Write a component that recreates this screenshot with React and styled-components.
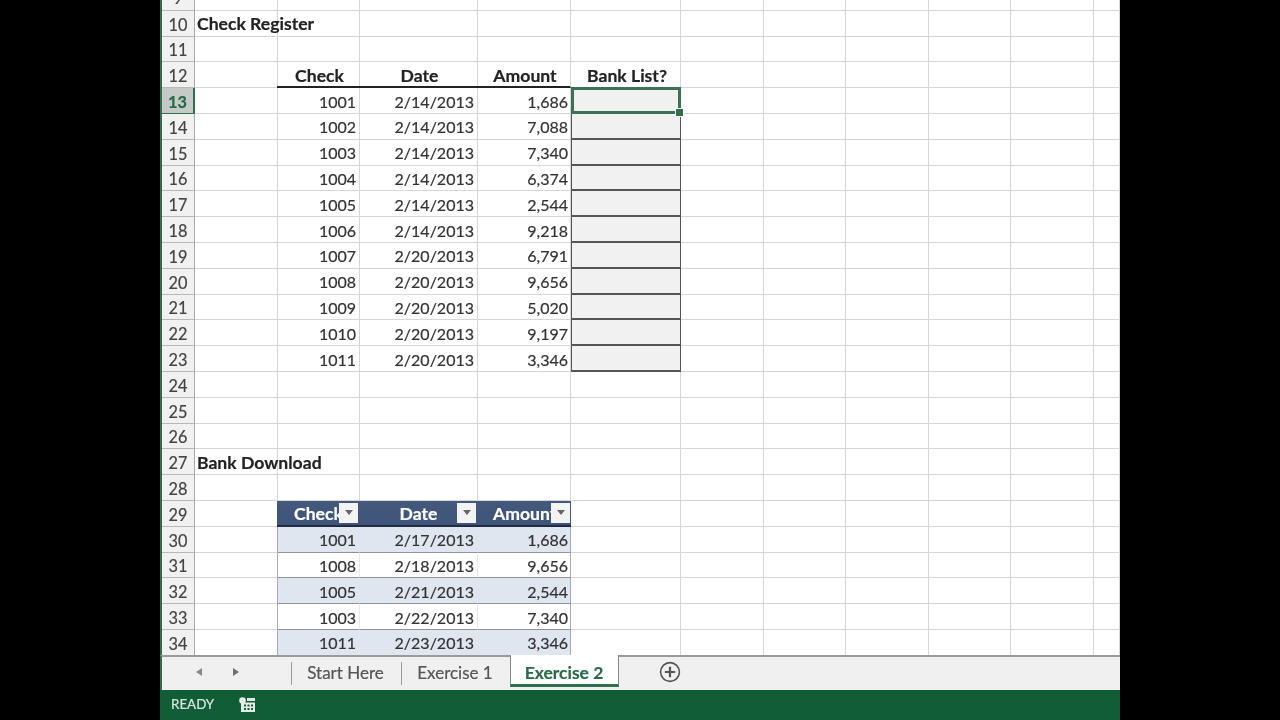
import React from "react";
import styled, { createGlobalStyle, css } from "styled-components";

const Global = createGlobalStyle`
  html, body { margin: 0; padding: 0; width: 1280px; height: 720px; overflow: hidden; background: #000; }
  #root { width: 1280px; height: 720px; }
`;

const COLS = "33px 83px 82px 118px 93px 110px 83px 82px 83px 82px 83px 1fr";
const ROW_H = 25.81;

const Stage = styled.div`
  width: 1280px;
  height: 720px;
  background: #000;
  display: flex;
  justify-content: center;
  font-family: Lato, "Open Sans", sans-serif;
`;
const Workbook = styled.div`
  width: 960px;
  height: 720px;
  display: flex;
  flex-direction: column;
  background: #fff;
  filter: blur(0.55px);
  -webkit-text-stroke: 0.2px currentColor;
`;
const Sheet = styled.div`
  height: 655px;
  flex: none;
  overflow: hidden;
  border-left: 2px solid #2f6f4e;
  box-sizing: border-box;
`;
const Row = styled.div`
  display: grid;
  grid-template-columns: ${COLS};
  height: ${(p) => p.$h}px;
`;
const RowHead = styled.div`
  box-sizing: border-box;
  display: flex;
  align-items: ${(p) => (p.$partial ? "flex-end" : "center")};
  justify-content: center;
  font-size: 16.3px;
  color: #444;
  padding: ${(p) => (p.$partial ? "0 0 3px 0" : "2px 0 0 0")};
  overflow: hidden;
  background: ${(p) => (p.$active ? "#c6cac7" : "#f1f1f1")};
  border-bottom: 1px solid ${(p) => (p.$active ? "#2f6f4e" : "#b8b8b8")};
  border-right: ${(p) => (p.$active ? "2px solid #2f6f4e" : "1px solid #a9a9a9")};
  ${(p) => p.$active && css`color: #1f6b45; font-weight: 700;`}
`;
const Cell = styled.div`
  box-sizing: border-box;
  position: relative;
  display: flex;
  align-items: center;
  white-space: nowrap;
  font-size: 16px;
  color: #333;
  border-right: 1px solid #d6d6d6;
  border-bottom: 1px solid #d6d6d6;
  justify-content: ${(p) => (p.$align === "center" ? "center" : p.$align === "left" ? "flex-start" : "flex-end")};
  padding: ${(p) => (p.$align === "left" ? "1px 0 0 2px" : p.$align === "center" ? "1px 0 0 3px" : p.$tight ? "1px 2px 0 0" : "1px 3px 0 0")};
  ${(p) => p.$bold && css`font-size: 17.6px; font-weight: 700; color: #222;`}
  ${(p) => p.$rule && css`
    border-bottom: 2px solid #222;
    margin-left: -1px;
    padding-top: 2px;
  `}
  ${(p) => p.$band && css`
    background: ${p.$band === "dark" ? "#e0e6ef" : "#fff"};
    border-right-color: ${p.$band === "dark" ? "#e0e6ef" : "#e8e8e8"};
    border-bottom: 1px solid #8f949c;
  `}
  ${(p) => p.$lastBand && css`border-right: 1px solid #a4adbb;`}
  ${(p) => p.$firstBand && css`box-shadow: -1px 0 0 #a4adbb;`}
`;
const InputCell = styled.div`
  box-sizing: border-box;
  position: relative;
  background: #f1f1f1;
  border-left: 1.5px solid #555;
  border-right: 1.5px solid #555;
  border-bottom: 2px solid #555;
  ${(p) => p.$selected && css`
    border: 3px solid #3b7157;
    margin-top: -1px;
    height: calc(100% + 1px);
    z-index: 2;
  `}
`;
const Handle = styled.span`
  position: absolute;
  right: -6px;
  bottom: -6px;
  width: 9px;
  height: 9px;
  background: #2f6f4e;
  border: 1px solid #fff;
  box-sizing: border-box;
`;
const TableHead = styled.div`
  box-sizing: border-box;
  position: relative;
  overflow: hidden;
  display: flex;
  align-items: center;
  justify-content: ${(p) => (p.$pad ? "flex-start" : "center")};
  padding: 2px 0 0 ${(p) => p.$pad || 0}px;
  margin-left: -1px;
  background: linear-gradient(#44597c, #3e5478);
  border-bottom: 2px solid #1f2c44;
  color: #fff;
  font-size: 17.6px;
  font-weight: 700;
  white-space: nowrap;
`;
const FilterBtn = styled.span`
  position: absolute;
  right: ${(p) => p.$right}px;
  top: 2px;
  width: 19px;
  height: 20px;
  background: #f3f3f3;
  display: flex;
  align-items: center;
  justify-content: center;
  &::after {
    content: "";
    border-left: 4.500px solid transparent;
    border-right: 4.500px solid transparent;
    border-top: 5px solid #666;
  }
`;
const TabBar = styled.div`
  height: 35px;
  flex: none;
  box-sizing: border-box;
  background: #f0f0f0;
  border-top: 2px solid #9a9a9a;
  border-left: 2px solid #2f6f4e;
  display: flex;
  align-items: flex-start;
  padding-left: 34px;
  color: #555;
  font-size: 17px;
`;
const Nav = styled.div`
  display: flex;
  align-items: center;
  gap: 31px;
  height: 30px;
  width: 95px;
  flex: none;
`;
const Arrow = styled.span`
  width: 0;
  height: 0;
  border-top: 4.500px solid transparent;
  border-bottom: 4.500px solid transparent;
  ${(p) => (p.$dir === "left" ? "border-right: 6px solid #8a8a8a;" : "border-left: 6px solid #6f6f6f;")}
`;
const Tab = styled.div`
  box-sizing: border-box;
  display: flex;
  align-items: center;
  justify-content: center;
  width: ${(p) => p.$w}px;
  position: relative;
  ${(p) => p.$active
    ? css`
        margin-top: -2px;
        height: 32px;
        padding: 5px 1px 0 0;
        background: #fff;
        color: #2b6a4a;
        font-weight: 700;
        font-size: 17.5px;
        border-left: 1px solid #8a8a8a;
        border-right: 1px solid #8a8a8a;
        border-bottom: 3px solid #2f6f4e;
      `
    : css`
        height: 30px;
        padding-right: 1px;
        &::before {
          content: "";
          position: absolute;
          left: 0;
          top: 5px;
          bottom: 2px;
          width: 1px;
          background: #9a9a9a;
        }
      `}
`;
const AddWrap = styled.div`
  margin-left: 40px;
  height: 30px;
  display: flex;
  align-items: center;
`;
const StatusBar = styled.div`
  height: 30px;
  flex: none;
  box-sizing: border-box;
  padding: 0 0 2px 11px;
  background: #115d38;
  display: flex;
  align-items: center;
  gap: 25px;
  color: #d9e6de;
  font-size: 13.4px;
`;

const regs = [
  [1001, "2/14/2013", "1,686"], [1002, "2/14/2013", "7,088"], [1003, "2/14/2013", "7,340"],
  [1004, "2/14/2013", "6,374"], [1005, "2/14/2013", "2,544"], [1006, "2/14/2013", "9,218"],
  [1007, "2/20/2013", "6,791"], [1008, "2/20/2013", "9,656"], [1009, "2/20/2013", "5,020"],
  [1010, "2/20/2013", "9,197"], [1011, "2/20/2013", "3,346"],
];
const bank = [
  [1001, "2/17/2013", "1,686"], [1008, "2/18/2013", "9,656"], [1005, "2/21/2013", "2,544"],
  [1003, "2/22/2013", "7,340"], [1011, "2/23/2013", "3,346"],
];

const Blank = ({ n }) => Array.from({ length: n }, (_, i) => <Cell key={"b" + i} />);

function SheetRow({ num, h = ROW_H, children, active, partial }) {
  return (
    <Row $h={h}>
      <RowHead $active={active} $partial={partial}>{num}</RowHead>
      {children}
    </Row>
  );
}

const AddIcon = () => (
  <svg width="22" height="22" viewBox="0 0 22 22" fill="none" stroke="#555" strokeWidth="1.6">
    <circle cx="11" cy="11" r="9.4" />
    <path d="M11 5.8v10.4M5.8 11h10.4" strokeWidth="2.2" />
  </svg>
);
const SheetIcon = () => (
  <svg width="16" height="15" viewBox="0 0 16 15">
    <circle cx="3.5" cy="3.500" r="3.3" fill="#e6efe9" />
    <rect x="8" y="1" width="8" height="3" fill="#dfe9e3" />
    <rect x="2" y="5.500" width="14" height="9.500" fill="#e3ece6" />
    <path d="M5 7.500h2v2H5zM8.500 7.500h2v2h-2zM12 7.500h2v2h-2zM5 11h2v2H5zM8.500 11h2v2h-2zM12 11h2v2h-2z" fill="#1c5f3d" />
  </svg>
);

export default function App() {
  return (
    <>
      <Global />
      <Stage>
        <Workbook>
          <Sheet>
            <SheetRow num="9" h={10.8} partial><Blank n={11} /></SheetRow>
            <SheetRow num="10">
              <Cell $align="left" $bold>Check Register</Cell>
              <Blank n={10} />
            </SheetRow>
            <SheetRow num="11"><Blank n={11} /></SheetRow>
            <SheetRow num="12">
              <Cell />
              <Cell $align="center" $bold $rule>Check</Cell>
              <Cell $align="center" $bold $rule>Date</Cell>
              <Cell $align="center" $bold $rule>Amount</Cell>
              <Cell $align="center" $bold>Bank List?</Cell>
              <Blank n={6} />
            </SheetRow>
            {regs.map((r, i) => (
              <SheetRow key={r[0]} num={13 + i} active={i === 0}>
                <Cell />
                <Cell>{r[0]}</Cell>
                <Cell>{r[1]}</Cell>
                <Cell $tight>{r[2]}</Cell>
                <InputCell $selected={i === 0}>
                  {i === 0 && <Handle />}
                </InputCell>
                <Blank n={6} />
              </SheetRow>
            ))}
            <SheetRow num="24"><Blank n={11} /></SheetRow>
            <SheetRow num="25"><Blank n={11} /></SheetRow>
            <SheetRow num="26"><Blank n={11} /></SheetRow>
            <SheetRow num="27">
              <Cell $align="left" $bold>Bank Download</Cell>
              <Blank n={10} />
            </SheetRow>
            <SheetRow num="28"><Blank n={11} /></SheetRow>
            <SheetRow num="29">
              <Cell />
              <TableHead $pad={17}>
                Check
                <FilterBtn $right={2} />
              </TableHead>
              <TableHead>
                Date
                <FilterBtn $right={2} />
              </TableHead>
              <TableHead $pad={16}>
                Amount
                <FilterBtn $right={1} />
              </TableHead>
              <Blank n={7} />
            </SheetRow>
            {bank.map((r, i) => {
              const band = i % 2 === 0 ? "dark" : "light";
              return (
                <SheetRow key={r[0]} num={30 + i}>
                  <Cell />
                  <Cell $band={band} $firstBand>{r[0]}</Cell>
                  <Cell $band={band}>{r[1]}</Cell>
                  <Cell $band={band} $tight $lastBand>{r[2]}</Cell>
                  <Blank n={7} />
                </SheetRow>
              );
            })}
          </Sheet>
          <TabBar>
            <Nav>
              <Arrow $dir="left" />
              <Arrow $dir="right" />
            </Nav>
            <Tab $w={110}>Start Here</Tab>
            <Tab $w={109}>Exercise 1</Tab>
            <Tab $active $w={109}>Exercise 2</Tab>
            <AddWrap><AddIcon /></AddWrap>
          </TabBar>
          <StatusBar>
            <span>READY</span>
            <SheetIcon />
          </StatusBar>
        </Workbook>
      </Stage>
    </>
  );
}
